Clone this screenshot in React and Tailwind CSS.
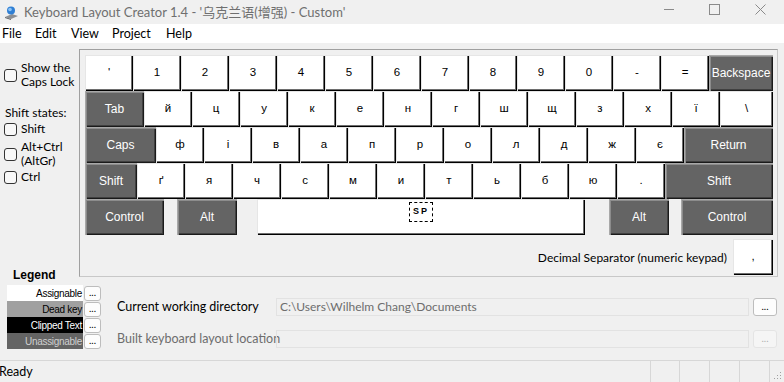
import React from "react";

const ui = "font-['Lato','Noto_Sans_CJK_SC',sans-serif]";
const keyFont = "font-['Liberation_Sans',sans-serif]";

const whiteKey =
  "bg-white text-black shadow-[inset_1px_1px_0_#e6e6e6,inset_-1px_-1px_0_#000,inset_-2px_-2px_0_#6e6e6e]";
const darkKey =
  "bg-[#646464] text-white shadow-[inset_1px_1px_0_#a8a8a8,inset_2px_2px_0_#8c8c8c,inset_-1px_-1px_0_#1a1a1a,inset_-2px_-2px_0_#404040]";

const rows = [
  [
    { t: "'" }, { t: "1" }, { t: "2" }, { t: "3" }, { t: "4" }, { t: "5" }, { t: "6" },
    { t: "7" }, { t: "8" }, { t: "9" }, { t: "0" }, { t: "-" }, { t: "=" },
    { t: "Backspace", w: "w-[64px]", dark: true },
  ],
  [
    { t: "Tab", w: "w-[59px]", dark: true },
    { t: "й" }, { t: "ц" }, { t: "у" }, { t: "к" }, { t: "е" }, { t: "н" },
    { t: "г" }, { t: "ш" }, { t: "щ" }, { t: "з" }, { t: "х" }, { t: "ї" },
    { t: "\\", w: "w-[53px]" },
  ],
  [
    { t: "Caps", w: "w-[71px]", dark: true },
    { t: "ф" }, { t: "і" }, { t: "в" }, { t: "а" }, { t: "п" }, { t: "р" },
    { t: "о" }, { t: "л" }, { t: "д" }, { t: "ж" }, { t: "є" },
    { t: "Return", w: "w-[89px]", dark: true },
  ],
  [
    { t: "Shift", w: "w-[52px]", dark: true },
    { t: "ґ" }, { t: "я" }, { t: "ч" }, { t: "с" }, { t: "м" }, { t: "и" },
    { t: "т" }, { t: "ь" }, { t: "б" }, { t: "ю" }, { t: "." },
    { t: "Shift", w: "w-[108px]", dark: true },
  ],
];

const Key = ({ t, w = "w-[48px]", dark, extra = "" }) => (
  <div
    className={`${w} h-[36px] shrink-0 flex items-center justify-center ${keyFont} ${
      dark ? `${darkKey} text-[12px]` : `${whiteKey} text-[11.5px]`
    } ${extra}`}
  >
    {t}
  </div>
);

const Check = ({ children }) => (
  <div className="flex items-center gap-[4px]">
    <div className="w-[13px] h-[13px] rounded-[3px] border border-[#333] bg-[#f8f8f8] shrink-0" />
    <div className="leading-[14px] whitespace-nowrap">{children}</div>
  </div>
);

const Dots = ({ disabled, cls = "" }) => (
  <div
    className={`flex items-center justify-center rounded-[3px] border ${
      disabled ? "border-[#e4e4e4] bg-[#f5f5f5] text-[#b0b0b0]" : "border-[#bdbdbd] bg-[#fdfdfd] text-black"
    } leading-none ${cls}`}
  >
    ...
  </div>
);

const legend = [
  { t: "Assignable", c: "bg-white text-black" },
  { t: "Dead key", c: "bg-[#a0a0a0] text-black" },
  { t: "Clipped Text", c: "bg-black text-white" },
  { t: "Unassignable", c: "bg-[#646464] text-[#d0d0d0]" },
];

export default function App() {
  return (
    <div className={`w-[784px] h-[382px] overflow-hidden bg-[#f0f0f0] text-[12px] text-black ${ui}`}>
      {/* title bar */}
      <div className="h-[24px] flex items-center">
        <svg width="15" height="15" viewBox="0 0 15 15" className="ml-[4px] mr-[5px]">
          <path d="M1 12 L8 9 L14 11 L7 14 Z" fill="#8c8f94" />
          <path d="M1 12 L7 14 L7 15 L1 13 Z" fill="#5f6266" />
          <circle cx="7" cy="5.5" r="4" fill="#2f7fd4" />
          <circle cx="6" cy="4.5" r="1.8" fill="#8cc3f5" />
        </svg>
        <span className="text-[#6f6f6f] text-[13px] pt-[1px]">Keyboard Layout Creator 1.4 - '乌克兰语(增强) - Custom'</span>
        <div className="ml-auto flex items-center h-full">
          <svg width="46" height="24" viewBox="0 0 46 24">
            <line x1="18" y1="9.5" x2="28" y2="9.5" stroke="#8a8a8a" strokeWidth="1" />
          </svg>
          <svg width="46" height="24" viewBox="0 0 46 24">
            <rect x="17.5" y="4.5" width="10" height="10" fill="none" stroke="#8a8a8a" strokeWidth="1" />
          </svg>
          <svg width="46" height="24" viewBox="0 0 46 24">
            <path d="M17.5 4.5 L27.5 14.5 M27.5 4.5 L17.5 14.5" stroke="#8a8a8a" strokeWidth="1" />
          </svg>
        </div>
      </div>

      {/* menu bar */}
      <div className="h-[19px] bg-white flex items-center pl-[2px] pt-[2px] text-[12.5px]">
        <span className="w-[33px]">File</span>
        <span className="w-[36px]">Edit</span>
        <span className="w-[41px]">View</span>
        <span className="w-[54px]">Project</span>
        <span>Help</span>
      </div>

      {/* main */}
      <div className="flex h-[241px]">
        <div className="w-[79px] h-full flex flex-col pl-[4px] text-[12px]">
          <div className="mt-[18px]">
            <Check>
              Show the
              <br />
              Caps Lock
            </Check>
          </div>
          <div className="mt-[17px] leading-[14px] pl-[1px]">Shift states:</div>
          <div className="mt-[2px]">
            <Check>Shift</Check>
          </div>
          <div className="mt-[4px]">
            <Check>
              Alt+Ctrl
              <br />
              (AltGr)
            </Check>
          </div>
          <div className="mt-[2px]">
            <Check>Ctrl</Check>
          </div>
          <div className={`mt-auto mb-[2px] pl-[9px] leading-[14px] font-bold text-[12px] ${keyFont}`}>Legend</div>
        </div>

        <div className="mt-[6px] w-[699px] h-[228px] border border-[#a0a0a0] border-r-[#c8c8c8] border-b-[#c8c8c8] pl-[5px] pt-[5px] flex flex-col">
          {rows.map((row, i) => (
            <div key={i} className="flex">
              {row.map((k, j) => (
                <Key key={j} {...k} />
              ))}
            </div>
          ))}
          <div className="flex">
            <Key t="Control" w="w-[79px]" dark />
            <Key t="Alt" w="w-[60px]" dark extra="ml-[13px]" />
            <div className={`w-[328px] h-[36px] ml-[20px] flex justify-center pt-[3px] ${whiteKey}`}>
              <div className={`h-[20px] px-[3px] border border-dashed border-black flex items-center text-[9px] font-bold tracking-[2px] ${keyFont}`}>
                SP
              </div>
            </div>
            <Key t="Alt" w="w-[60px]" dark extra="ml-[24px]" />
            <Key t="Control" w="w-[92px]" dark extra="ml-[12px]" />
          </div>
          <div className="flex items-center justify-end mt-[4px] pr-[4px]">
            <span className="mr-[6px] text-[12px] whitespace-nowrap pt-[1px]">Decimal Separator (numeric keypad)</span>
            <Key t="," w="w-[40px]" />
          </div>
        </div>
      </div>

      {/* legend + paths */}
      <div className="flex h-[76px]">
        <div className="pl-[7px] pt-[1px] flex flex-col">
          {legend.map((l) => (
            <div key={l.t} className="flex items-center h-[16px]">
              <div className={`w-[76px] h-full flex items-center justify-end pr-[1px] text-[10px] tracking-[-0.3px] ${keyFont} ${l.c}`}>
                {l.t}
              </div>
              <Dots cls="ml-[1px] w-[17px] h-[15px] text-[10px] pb-[3px]" />
            </div>
          ))}
        </div>
        <div className="ml-[16px] flex-1 pt-[14px] pr-[7px] flex flex-col gap-[14px] text-[12.5px]">
          <div className="flex items-center h-[18px]">
            <span className="w-[159px] whitespace-nowrap">Current working directory</span>
            <div className="w-[473px] h-full border border-[#e2e2e2] flex items-center pl-[3px] text-[#6d6d6d] text-[12px]">
              C:\Users\Wilhelm Chang\Documents
            </div>
            <Dots cls="ml-[4px] w-[24px] h-[18px] text-[10px] pb-[3px]" />
          </div>
          <div className="flex items-center h-[18px]">
            <span className="w-[159px] whitespace-nowrap text-[#6d6d6d]">Built keyboard layout location</span>
            <div className="w-[473px] h-full border border-[#e2e2e2]" />
            <Dots disabled cls="ml-[4px] w-[24px] h-[18px] text-[10px] pb-[3px]" />
          </div>
        </div>
      </div>

      {/* status bar */}
      <div className="h-[22px] border-t border-[#d7d7d7] flex items-stretch text-[12.5px]">
        <div className="flex-1 flex items-center -ml-[1px] pt-[2px]">Ready</div>
        <div className="w-[29px] border-l border-[#d7d7d7]" />
        <div className="w-[30px] border-l border-[#d7d7d7]" />
        <div className="w-[30px] border-l border-[#d7d7d7]" />
        <div className="w-[30px] border-l border-[#d7d7d7]" />
        <div className="w-[15px] border-l border-[#d7d7d7] flex items-end justify-end pr-[2px] pb-[2px]">
          <svg width="10" height="10" viewBox="0 0 10 10">
            <rect x="8" y="2" width="1" height="1" fill="#a0a0a0" />
            <rect x="5" y="5" width="1" height="1" fill="#a0a0a0" />
            <rect x="8" y="5" width="1" height="1" fill="#a0a0a0" />
            <rect x="2" y="8" width="1" height="1" fill="#a0a0a0" />
            <rect x="5" y="8" width="1" height="1" fill="#a0a0a0" />
            <rect x="8" y="8" width="1" height="1" fill="#a0a0a0" />
          </svg>
        </div>
      </div>
    </div>
  );
}
